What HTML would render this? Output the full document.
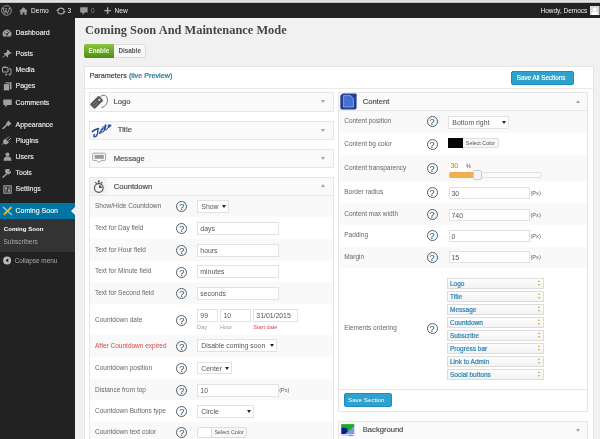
<!DOCTYPE html>
<html><head><meta charset="utf-8">
<style>
*{box-sizing:border-box;margin:0;padding:0}
html,body{width:600px;height:439px;overflow:hidden;background:#f1f1f1;font-family:"Liberation Sans",sans-serif;position:relative}
.a{position:absolute}
.t{position:absolute;white-space:nowrap}
#topstrip{left:0;top:0;width:600px;height:3px;background:linear-gradient(#dcdcdc 0,#dcdcdc 1px,#e6e6e6 1px,#e6e6e6 2px,#bdbdbd 2px)}
#bar{left:0;top:3px;width:600px;height:15px;background:#222}
#side{left:0;top:18px;width:75px;height:421px;background:#222}
.menu{color:#eee;font-size:7px;left:15.5px;line-height:10px;-webkit-text-stroke:0.12px #eee}
.ico{position:absolute}
#panel{left:84px;top:66px;width:510px;height:380px;background:#fff;border:1px solid #e5e5e5}
#phead{left:85px;top:88px;width:508px;height:1px;background:#eaeaea}
.box{position:absolute;background:#fafafa;border:1px solid #e6e6e6}
.bh{position:absolute;font-size:7.6px;color:#4f4f4f;line-height:10px;-webkit-text-stroke:0.18px #4f4f4f}
.arr{position:absolute;width:0;height:0;border-left:2.5px solid transparent;border-right:2.5px solid transparent}
.dn{border-top:3px solid #a5a5a5}
.up{border-bottom:3px solid #a5a5a5}
.row{position:absolute;background:#f9f9f9}
.lbl{position:absolute;font-size:6.5px;color:#666;line-height:10px;white-space:nowrap;margin-top:0px}
.q{position:absolute;width:11px;height:11px;border:1px solid #5a5a5a;border-radius:50%;text-align:center;font-size:9px;line-height:10px;color:#2a72a6;-webkit-text-stroke:0.18px #2a72a6;margin-left:-0.1px;margin-top:0.85px}
.inp{position:absolute;background:#fff;border:1px solid #e2e2e2;font-size:6.9px;color:#555;line-height:11px;padding-left:2px;white-space:nowrap}
.sel{position:absolute;background:#fff;border:1px solid #e2e2e2;font-size:6.9px;color:#555;line-height:11px;padding-left:3px;white-space:nowrap}
.sel:after{content:"";position:absolute;right:2px;top:4px;border-left:2px solid transparent;border-right:2px solid transparent;border-top:3.3px solid #222}
.px{position:absolute;font-size:5.6px;color:#5a5a5a;line-height:8px}
.ord{position:absolute;left:447px;width:97px;height:10.5px;background:linear-gradient(#fdfdfd,#f3f3f3);border:1px solid #dcdcdc;font-size:6.5px;color:#2f86b6;line-height:9.2px;padding-left:2px;-webkit-text-stroke:0.22px #2f86b6}
.ord:after{content:"";position:absolute;right:3.4px;top:1px;width:0;height:0;border-left:1.7px solid transparent;border-right:1.7px solid transparent;border-bottom:2.8px solid #e8990c}
.ord:before{content:"";position:absolute;right:3.4px;top:4.6px;width:0;height:0;border-left:1.7px solid transparent;border-right:1.7px solid transparent;border-top:2.8px solid #e8990c}
</style></head><body>
<div id="root" style="position:absolute;left:0;top:0;width:600px;height:439px;will-change:transform">
<div id="topstrip" class="a"></div>
<div id="bar" class="a"></div>
<div id="side" class="a"></div>

<!-- admin bar content -->
<div class="t" style="left:31px;top:5.5px;font-size:6.6px;color:#eee;line-height:10px">Demo</div>
<div class="t" style="left:67.5px;top:5.5px;font-size:6.6px;color:#eee;line-height:10px">3</div>
<div class="t" style="left:91px;top:5.5px;font-size:6.6px;color:#888;line-height:10px">0</div>
<div class="t" style="left:114.5px;top:5.5px;font-size:6.6px;color:#eee;line-height:10px">New</div>
<div class="t" style="left:540.5px;top:5.5px;font-size:6.5px;color:#eee;line-height:10px">Howdy, Democs</div>
<svg class="a" style="left:590px;top:6px" width="9.5" height="9" viewBox="0 0 9.5 9"><rect width="9.5" height="9" fill="#d8d8d8"/><circle cx="4.75" cy="3.3" r="1.9" fill="#fff"/><path d="M1.3 9 C1.6 6.4 3 5.6 4.75 5.6 C6.5 5.6 7.9 6.4 8.2 9 Z" fill="#fff"/></svg>

<!-- sidebar -->
<div class="t menu" style="top:27.5px">Dashboard</div>
<div class="t menu" style="top:48.7px">Posts</div>
<div class="t menu" style="top:65px">Media</div>
<div class="t menu" style="top:81.3px">Pages</div>
<div class="t menu" style="top:97.7px">Comments</div>
<div class="t menu" style="top:119.6px">Appearance</div>
<div class="t menu" style="top:135.6px">Plugins</div>
<div class="t menu" style="top:151.6px">Users</div>
<div class="t menu" style="top:167.7px">Tools</div>
<div class="t menu" style="top:184px">Settings</div>
<div class="a" style="left:0;top:203px;width:75px;height:16px;background:#0074a2"></div>
<div class="t menu" style="top:206.2px;color:#fff">Coming Soon</div>
<div class="a" style="left:71px;top:206.5px;width:0;height:0;border-top:4px solid transparent;border-bottom:4px solid transparent;border-right:4px solid #f1f1f1"></div>
<div class="a" style="left:0;top:219px;width:75px;height:33px;background:#333"></div>
<div class="t" style="left:3.8px;top:224.1px;font-size:6.1px;color:#fff;font-weight:bold;line-height:10px">Coming Soon</div>
<div class="t" style="left:3.5px;top:237.2px;font-size:6.5px;color:#aaa;line-height:10px">Subscribers</div>
<div class="t" style="left:14.7px;top:255.6px;font-size:6.4px;color:#aaa;line-height:10px">Collapse menu</div>

<!-- sidebar icons -->
<svg class="a" style="left:2px;top:28.5px" width="10" height="8" viewBox="0 0 10 8"><path d="M1.3 7.4 A4.4 4.4 0 1 1 8.7 7.4 Z" fill="#a0a0a0"/><path d="M5 5.6 L7.3 2.6" stroke="#222" stroke-width="1"/><circle cx="5" cy="5.6" r="1" fill="#222"/><circle cx="2.7" cy="4.2" r="0.6" fill="#222"/><circle cx="5" cy="2.3" r="0.6" fill="#222"/></svg>
<svg class="a" style="left:2px;top:49px" width="10" height="9" viewBox="0 0 10 9"><path d="M5.5 0.5 L9.5 4.3 L8.5 5 L7.6 4.6 L6 6.4 L6.3 7.8 L5.6 8.4 L1.6 4.6 L2.2 3.9 L3.6 4.1 L5.2 2.4 L4.8 1.4 Z" fill="#a0a0a0"/><path d="M3.3 6 L0.6 8.6" stroke="#a0a0a0" stroke-width="1"/></svg>
<svg class="a" style="left:2px;top:65.5px" width="10" height="10" viewBox="0 0 10 10"><rect x="0.5" y="1.5" width="5.5" height="4.5" rx="0.8" fill="none" stroke="#a0a0a0" stroke-width="1.1"/><rect x="1.5" y="0.3" width="2.5" height="1.4" fill="#a0a0a0"/><path d="M7 3 H9 V8.5" fill="none" stroke="#a0a0a0" stroke-width="1"/><circle cx="7.6" cy="8.6" r="1" fill="#a0a0a0"/><circle cx="4.2" cy="8.6" r="1" fill="#a0a0a0"/></svg>
<svg class="a" style="left:2.5px;top:82px" width="9" height="9" viewBox="0 0 9 9"><rect x="2.5" y="0.3" width="6" height="7" fill="#a0a0a0"/><rect x="0.5" y="1.8" width="6" height="7" fill="#a0a0a0" stroke="#222" stroke-width="0.7"/></svg>
<svg class="a" style="left:2.5px;top:98.5px" width="9" height="9" viewBox="0 0 9 9"><path d="M0.3 0.5 H8.7 V6 H4.5 L2.2 8.6 V6 H0.3 Z" fill="#a0a0a0"/></svg>
<svg class="a" style="left:2px;top:120px" width="10" height="9" viewBox="0 0 10 9"><path d="M6.2 0.6 L9.4 3.4 L6.6 6.2 L5.4 5.6 L3.8 4.2 Z" fill="#a0a0a0"/><path d="M4.6 5 L1 8.6" stroke="#a0a0a0" stroke-width="1.6" stroke-linecap="round"/></svg>
<svg class="a" style="left:2px;top:136px" width="10" height="9" viewBox="0 0 10 9"><path d="M3.2 2.5 L7 6.3 L5 8.2 L2.5 8.2 L1.2 7 L1.2 4.5 Z" fill="#a0a0a0"/><path d="M4.5 3 L7 0.5 M6.2 4.8 L9 2" stroke="#a0a0a0" stroke-width="1"/><path d="M1.3 7.2 L0.3 8.6" stroke="#a0a0a0" stroke-width="1"/></svg>
<svg class="a" style="left:2.5px;top:152px" width="9" height="9" viewBox="0 0 9 9"><circle cx="4.5" cy="2.4" r="2" fill="#a0a0a0"/><path d="M0.6 8.8 C0.6 5.5 2 4.6 4.5 4.6 C7 4.6 8.4 5.5 8.4 8.8 Z" fill="#a0a0a0"/></svg>
<svg class="a" style="left:2px;top:168.5px" width="10" height="9" viewBox="0 0 10 9"><path d="M1 8.3 L5.2 4.3" stroke="#a0a0a0" stroke-width="1.5" stroke-linecap="round"/><path d="M4.6 4.4 A2.6 2.6 0 1 1 8 1 L6.8 2.3 L7.5 3 L8.8 1.8 A2.6 2.6 0 0 1 5.5 5.2 Z" fill="#a0a0a0"/></svg>
<svg class="a" style="left:2.5px;top:184.5px" width="9" height="9" viewBox="0 0 9 9"><rect x="0.3" y="0.3" width="8.4" height="8.4" fill="#a0a0a0"/><rect x="1.3" y="1.3" width="6.4" height="6.4" fill="#3a3a3a"/><path d="M3 1.8 V7.2 M6 1.8 V7.2" stroke="#a0a0a0" stroke-width="0.8"/><rect x="2" y="2.6" width="2" height="1.6" fill="#a0a0a0"/><rect x="5" y="4.8" width="2" height="1.6" fill="#a0a0a0"/></svg>
<svg class="a" style="left:2px;top:205.5px" width="11" height="10" viewBox="0 0 11 10"><path d="M1 1 L10 9" stroke="#7fc4e8" stroke-width="1.6"/><path d="M1.5 9 L9.5 1" stroke="#e8b923" stroke-width="1.8"/><path d="M1 9.5 L1.6 8 L2.4 8.8 Z" fill="#333"/></svg>
<svg class="a" style="left:2.5px;top:255.8px" width="9" height="9" viewBox="0 0 9 9"><circle cx="4.1" cy="4.4" r="4" fill="#bbb"/><path d="M5.3 2.3 L2.4 4.4 L5.3 6.5 Z" fill="#222"/></svg>
<!-- admin bar icons -->
<svg class="a" style="left:0.5px;top:5px" width="11" height="11" viewBox="0 0 11 11"><circle cx="5.5" cy="5.5" r="4.8" fill="none" stroke="#999" stroke-width="1"/><path d="M2 3.4 L3.6 8.6 L5 4.6 L6.4 8.6 L8.6 3.4 M1.6 3.4 H3.4 M4.3 3.4 H6 M7.6 3.4 H9.2" fill="none" stroke="#999" stroke-width="0.95"/></svg>
<svg class="a" style="left:18.5px;top:6.5px" width="9" height="8" viewBox="0 0 9 8"><path d="M4.5 0.3 L8.8 4.2 L7.6 4.2 L7.6 7.8 L5.4 7.8 L5.4 5.4 L3.6 5.4 L3.6 7.8 L1.4 7.8 L1.4 4.2 L0.2 4.2 Z" fill="#999"/></svg>
<svg class="a" style="left:55.5px;top:7px" width="10" height="8" viewBox="0 0 10 8"><path d="M1.6 3.2 A3.5 3 0 0 1 8.2 3" fill="none" stroke="#aaa" stroke-width="1.2"/><path d="M8.4 4.8 A3.5 3 0 0 1 1.8 5" fill="none" stroke="#aaa" stroke-width="1.2"/><path d="M0 4 L2.6 1.8 L2.6 4.6 Z" fill="#aaa"/><path d="M10 4 L7.4 6.2 L7.4 3.4 Z" fill="#aaa"/></svg>
<svg class="a" style="left:79.5px;top:7px" width="8" height="8.5" viewBox="0 0 8 8.5"><path d="M0.2 0.3 H7.6 V5.6 H4.6 L2.6 8.2 V5.6 H0.2 Z" fill="#999"/></svg>
<svg class="a" style="left:103.5px;top:6.5px" width="8" height="8" viewBox="0 0 8 8"><path d="M3.6 0.3 V6.9 M0.3 3.6 H6.9" stroke="#aaa" stroke-width="1.4"/></svg>

<!-- title -->
<div class="t" style="left:85px;top:21px;font-size:12.4px;font-weight:bold;color:#464646;font-family:'Liberation Serif',serif;line-height:18px">Coming Soon And Maintenance Mode</div>
<div class="a" style="left:84px;top:43.5px;width:61.5px;height:14.5px;border:1px solid #dcdcdc;border-radius:2px;background:#f8f8f8"></div>
<div class="a" style="left:84px;top:43.5px;width:29.8px;height:14.5px;border-radius:2px 0 0 2px;background:linear-gradient(#8cc640,#4c8c12)"></div>
<div class="t" style="left:88.5px;top:45.7px;font-size:6.3px;font-weight:bold;color:#eef5dc;line-height:10px">Enable</div>
<div class="t" style="left:118.5px;top:45.7px;font-size:6.3px;font-weight:bold;color:#50545c;line-height:10px">Disable</div>

<!-- panel -->
<div id="panel" class="a"></div>
<div id="phead" class="a"></div>
<div class="t" style="left:89.4px;top:70.8px;font-size:7.25px;color:#444;line-height:10px;-webkit-text-stroke:0.2px #444">Parameters <span style="color:#21759b;-webkit-text-stroke:0.2px #21759b">(live Preview)</span></div>
<div class="a" style="left:511px;top:71px;width:63px;height:13.5px;background:#2ea2cc;border-radius:2px;border:1px solid #1e8cbe"></div>
<div class="t" style="left:516.7px;top:72.8px;font-size:6.3px;color:#fff;line-height:10px;-webkit-text-stroke:0.15px #fff">Save All Sections</div>

<!-- left boxes -->
<div class="box" style="left:89px;top:92px;width:245px;height:20px"></div>
<div class="bh" style="left:113.5px;top:97px">Logo</div>
<div class="arr dn" style="left:321px;top:100px"></div>

<div class="box" style="left:89px;top:121px;width:245px;height:19px"></div>
<div class="bh" style="left:117.8px;top:125.3px">Title</div>
<div class="arr dn" style="left:321px;top:128.5px"></div>

<div class="box" style="left:89px;top:149px;width:245px;height:19px"></div>
<div class="bh" style="left:113.8px;top:153.5px">Message</div>
<div class="arr dn" style="left:321px;top:156.5px"></div>

<div class="box" style="left:89px;top:177px;width:245px;height:270px;background:#fff"></div>
<div class="a" style="left:90px;top:178px;width:243px;height:18px;background:#fafafa;border-bottom:1px solid #e6e6e6"></div>
<div class="bh" style="left:113.8px;top:181.8px">Countdown</div>
<div class="arr up" style="left:321px;top:184px"></div>

<!-- right content box -->
<div class="box" style="left:338px;top:92px;width:250px;height:320px;background:#fff"></div>
<div class="a" style="left:339px;top:93px;width:248px;height:18px;background:#fafafa;border-bottom:1px solid #e6e6e6"></div>
<div class="bh" style="left:362.7px;top:97px">Content</div>
<div class="arr up" style="left:575.5px;top:99.5px"></div>

<div class="box" style="left:338px;top:421px;width:250px;height:30px"></div>
<div class="bh" style="left:362.8px;top:425px">Background</div>
<div class="arr dn" style="left:575.5px;top:428.5px"></div>

<!-- header icons -->
<svg class="a" style="left:88px;top:92px" width="22" height="18" viewBox="0 0 22 18"><g transform="translate(8.6 10.4) rotate(-45)"><rect x="-6.3" y="-3.4" width="12.6" height="6.8" rx="1.3" fill="#555"/><circle cx="3.8" cy="0" r="1.15" fill="#f4f4f4"/><path d="M-4.6 -1.1 H1 M-4.6 1.1 H1" stroke="#ccc" stroke-width="0.6" stroke-dasharray="0.9 0.6"/></g><path d="M11.2 7.6 C 12 2.6, 17.6 1.6, 19.2 6.2 C 20.4 10.2, 17.6 14.8, 13.4 15.6" fill="none" stroke="#6a6a6a" stroke-width="0.95"/></svg>
<svg class="a" style="left:88px;top:120px" width="24" height="20" viewBox="88 120 24 20"><g fill="none" stroke="#2b4a9a" stroke-linecap="round" stroke-linejoin="round"><path d="M92.3 131.6 Q94.5 129.6 98.6 128.6" stroke-width="1.5"/><path d="M97.8 128.8 Q98.6 132 96.6 135.8 Q95 137.6 93.8 136.4 Q93.4 135.2 94.6 134.6" stroke-width="1.4"/><path d="M99.4 133.4 Q100 132.2 100.6 131" stroke-width="1.1"/><path d="M100.8 133.2 Q102.2 130 103.2 126.6 M101.4 129.4 L103.4 128.8" stroke-width="1.1"/><path d="M102.8 132.2 Q104.2 130.6 105.2 128.4 Q106.4 125.4 105.8 124.6 Q104.8 125.2 104.4 128.2 Q104.2 130.4 106 129.8 Q107.6 128.8 108.2 127.4 Q109.6 126.8 110 125.4 Q109.8 124.2 108.6 125 Q107.6 126.4 108.4 127.2 Q109.6 127.4 111 125.2" stroke-width="1.1"/></g><circle cx="101.2" cy="129.4" r="0.6" fill="#2b4a9a"/></svg>
<svg class="a" style="left:91px;top:151px" width="16" height="13" viewBox="91 151 16 13"><path d="M93.6 153.2 H104.6 Q105.6 153.2 105.6 154.2 V159.4 Q105.6 160.4 104.6 160.4 H101.4 L98.9 162.4 L96.4 160.4 H93.6 Q92.6 160.4 92.6 159.4 V154.2 Q92.6 153.2 93.6 153.2 Z" fill="#fbfbfb" stroke="#9c9c9c" stroke-width="0.95"/><rect x="94.6" y="154.9" width="9.2" height="3.9" fill="#9a9a9a"/></svg>
<div class="a" style="left:90px;top:178px;width:17px;height:17px;background:#f2f2f2"></div>
<svg class="a" style="left:92px;top:179px" width="14" height="15" viewBox="92 179 14 15"><circle cx="98.8" cy="188" r="4.35" fill="none" stroke="#505050" stroke-width="1.15"/><path d="M99 188 V185.2 A2.8 2.8 0 0 1 101.8 188 Z" fill="#505050"/><circle cx="98.8" cy="181.2" r="0.95" fill="#505050"/><path d="M98.8 181.6 V183.6 M95.2 182.1 L96.8 183.7 M102.4 182.1 L100.8 183.7" stroke="#505050" stroke-width="1.1"/></svg>
<svg class="a" style="left:340px;top:93.3px" width="17" height="17" viewBox="0 0 17 17"><path d="M2.5 0.4 H15.4 Q16.6 0.4 16.6 1.6 V14.6 Q16.6 16.6 14.6 16.6 H2.4 Q0.3 16.6 0.3 14.4 V2.8 Z" fill="#233e94"/><path d="M3.6 2.6 H10.6 L13.4 5.4 V14 H3.6 Z" fill="#4371cf" stroke="#8fb0ee" stroke-width="0.8"/></svg>
<svg class="a" style="left:340px;top:423px" width="16" height="15" viewBox="340 423 16 15"><rect x="341" y="424" width="13.6" height="10.4" fill="#e8e8e8"/><rect x="341.4" y="424.3" width="12.8" height="9.8" fill="#7d97ea"/><path d="M341.4 424.3 H354.2 V425.8 Q351.5 429.5 348.2 431.2 Q346.6 430.2 347.4 428.4 Q344.8 427.2 341.4 427.6 Z" fill="#19ae1c"/><path d="M341.4 427.6 Q344.8 427.2 347.4 428.4 Q346.6 430.2 348.2 431.2 L344.8 434.1 H341.4 Z" fill="#0b189e"/><path d="M342 434.6 H354.4 L354 436 H341.8 Z" fill="#d4d4d4"/><rect x="349" y="435" width="4" height="1" fill="#888"/></svg>

<!-- ROWS -->
<div class="row" style="left:90px;top:196px;width:243px;height:21px"></div>
<div class="row" style="left:90px;top:239px;width:243px;height:22px"></div>
<div class="row" style="left:90px;top:282px;width:243px;height:22px"></div>
<div class="row" style="left:90px;top:335px;width:243px;height:22px"></div>
<div class="row" style="left:90px;top:379px;width:243px;height:21px"></div>
<div class="row" style="left:90px;top:422px;width:243px;height:25px"></div>
<div class="row" style="left:339px;top:111px;width:248px;height:22px"></div>
<div class="row" style="left:339px;top:155px;width:248px;height:27px"></div>
<div class="row" style="left:339px;top:203px;width:248px;height:22px"></div>
<div class="row" style="left:339px;top:247px;width:248px;height:21px"></div>
<div class="lbl" style="left:95px;top:201.4px">Show/Hide Countdown</div>
<div class="q" style="left:176.25px;top:200.65px">?</div>
<div class="lbl" style="left:95px;top:223.15px">Text for Day field</div>
<div class="q" style="left:176.25px;top:222.4px">?</div>
<div class="lbl" style="left:95px;top:244.85px">Text for Hour field</div>
<div class="q" style="left:176.25px;top:244.1px">?</div>
<div class="lbl" style="left:95px;top:266.45px">Text for Minute field</div>
<div class="q" style="left:176.25px;top:265.7px">?</div>
<div class="lbl" style="left:95px;top:288.1px">Text for Second field</div>
<div class="q" style="left:176.25px;top:287.35px">?</div>
<div class="lbl" style="left:95px;top:314.5px">Countdown date</div>
<div class="q" style="left:176.25px;top:313.75px">?</div>
<div class="lbl" style="left:95px;top:340.85px;color:#d64848">After Countdown expired</div>
<div class="q" style="left:176.25px;top:340.1px">?</div>
<div class="lbl" style="left:95px;top:362.85px">Countdown position</div>
<div class="q" style="left:176.25px;top:362.1px">?</div>
<div class="lbl" style="left:95px;top:384.7px">Distance from top</div>
<div class="q" style="left:176.25px;top:383.95px">?</div>
<div class="lbl" style="left:95px;top:406.3px">Countdown Buttons type</div>
<div class="q" style="left:176.25px;top:405.55px">?</div>
<div class="lbl" style="left:95px;top:427.3px">Countdown text color</div>
<div class="q" style="left:176.25px;top:426.55px">?</div>
<div class="lbl" style="left:344.2px;top:116.1px">Content position</div>
<div class="q" style="left:426.65px;top:115.35px">?</div>
<div class="lbl" style="left:344.2px;top:138.5px">Content bg color</div>
<div class="q" style="left:426.65px;top:137.75px">?</div>
<div class="lbl" style="left:344.2px;top:163.0px">Content transparency</div>
<div class="q" style="left:426.65px;top:162.25px">?</div>
<div class="lbl" style="left:344.2px;top:187.0px">Border radius</div>
<div class="q" style="left:426.65px;top:186.25px">?</div>
<div class="lbl" style="left:344.2px;top:208.5px">Content max width</div>
<div class="q" style="left:426.65px;top:207.75px">?</div>
<div class="lbl" style="left:344.2px;top:230.3px">Padding</div>
<div class="q" style="left:426.65px;top:229.55px">?</div>
<div class="lbl" style="left:344.2px;top:251.8px">Margin</div>
<div class="q" style="left:426.65px;top:251.05px">?</div>
<div class="lbl" style="left:344.2px;top:323.2px">Elements ordering</div>
<div class="q" style="left:426.65px;top:322.45px">?</div>

<!-- left fields -->
<div class="sel" style="left:197.3px;top:200.3px;width:31.7px;height:13.2px">Show</div>
<div class="inp" style="left:197.3px;top:222.3px;width:81.5px;height:13px">days</div>
<div class="inp" style="left:197.3px;top:243.8px;width:81.5px;height:13px">hours</div>
<div class="inp" style="left:197.3px;top:265.4px;width:81.5px;height:13px">minutes</div>
<div class="inp" style="left:197.3px;top:287px;width:81.5px;height:13px">seconds</div>
<div class="inp" style="left:197.3px;top:308.5px;width:21px;height:13px">99</div>
<div class="inp" style="left:220.4px;top:308.5px;width:30.8px;height:13px">10</div>
<div class="inp" style="left:253.3px;top:308.5px;width:44.6px;height:13px">31/01/2015</div>
<div class="px" style="left:197.1px;top:323px;color:#999">Day</div>
<div class="px" style="left:220px;top:323px;color:#999">Hour</div>
<div class="px" style="left:253.2px;top:323px;color:#d64848">Start date</div>
<div class="sel" style="left:197.3px;top:339.3px;width:79.7px;height:13px">Disable coming soon</div>
<div class="sel" style="left:197.3px;top:361.7px;width:35.2px;height:12.5px">Center</div>
<div class="inp" style="left:197.3px;top:383.8px;width:81.5px;height:12.8px">10</div>
<div class="px" style="left:279.2px;top:386px">(Px)</div>
<div class="sel" style="left:197.3px;top:405.3px;width:57.2px;height:12.8px">Circle</div>
<div class="a" style="left:197.3px;top:426.5px;width:50.2px;height:11.7px;border:1px solid #ddd;border-radius:2px;background:#f7f7f7"></div>
<div class="a" style="left:198.3px;top:427.5px;width:13.4px;height:9.7px;background:#fff;border-right:1px solid #ddd"></div>
<div class="t" style="left:214.5px;top:428px;font-size:5.4px;color:#555;line-height:8px">Select Color</div>

<!-- right fields -->
<div class="sel" style="left:448.3px;top:115.8px;width:60.4px;height:13px">Bottom right</div>
<div class="a" style="left:448px;top:137.6px;width:50.6px;height:10.8px;border:1px solid #ddd;border-radius:2px;background:#f7f7f7"></div>
<div class="a" style="left:448px;top:137.6px;width:15px;height:10.8px;background:#0a0505"></div>
<div class="t" style="left:465.8px;top:138.8px;font-size:5.4px;color:#555;line-height:8px">Select Color</div>
<div class="a" style="left:448.5px;top:160.5px;width:17px;height:10px;background:#fff"></div>
<div class="t" style="left:450.6px;top:161px;font-size:6.8px;color:#e58a22;line-height:9px;-webkit-text-stroke:0.15px #e58a22">30</div>
<div class="t" style="left:466px;top:161.5px;font-size:5.5px;color:#555;line-height:8px">%</div>
<div class="a" style="left:448.5px;top:172.4px;width:93px;height:5.4px;border:1px solid #e0e0e0;border-radius:2px;background:#fafafa"></div>
<div class="a" style="left:448.5px;top:172.4px;width:27px;height:5.4px;border-radius:2px 0 0 2px;background:#f0b04e"></div>
<div class="a" style="left:472.5px;top:170px;width:9px;height:9.6px;border:1px solid #ccc;border-radius:2px;background:#f5f5f5"></div>
<div class="inp" style="left:448.5px;top:186.6px;width:81px;height:12.9px">30</div>
<div class="px" style="left:530.5px;top:189px">(Px)</div>
<div class="inp" style="left:448.5px;top:208.5px;width:81px;height:12px">740</div>
<div class="px" style="left:530.5px;top:210.5px">(Px)</div>
<div class="inp" style="left:448.5px;top:230px;width:81px;height:12.4px">0</div>
<div class="px" style="left:530.5px;top:232.2px">(Px)</div>
<div class="inp" style="left:448.5px;top:251.4px;width:81px;height:12px">15</div>
<div class="px" style="left:530.5px;top:253.4px">(Px)</div>
<div class="ord" style="top:278.2px">Logo</div>
<div class="ord" style="top:291.2px">Title</div>
<div class="ord" style="top:304.2px">Message</div>
<div class="ord" style="top:317.2px">Countdown</div>
<div class="ord" style="top:330.2px">Subscribe</div>
<div class="ord" style="top:343.2px">Progress bar</div>
<div class="ord" style="top:356.2px">Link to Admin</div>
<div class="ord" style="top:369.2px">Social buttons</div>
<div class="a" style="left:339px;top:389px;width:248px;height:1px;background:#e6e6e6"></div>
<div class="a" style="left:343.8px;top:393.3px;width:48px;height:13.4px;background:#2ea2cc;border-radius:2px;border:1px solid #1e8cbe"></div>
<div class="t" style="left:348px;top:395px;font-size:6.2px;color:#fff;line-height:10px">Save Section</div>

</div>
</body></html>
